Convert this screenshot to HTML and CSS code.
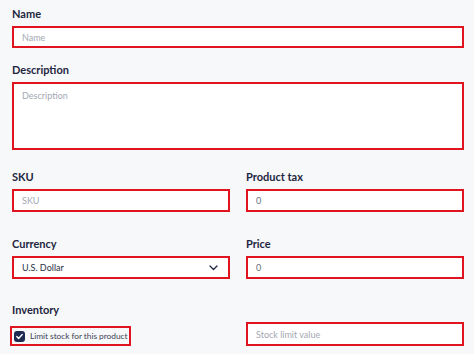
FILE: index.html
```html
<!DOCTYPE html>
<html>
<head>
<meta charset="utf-8">
<link rel="stylesheet" href="styles.css">
</head>
<body>
<form class="form">
  <div class="field">
    <label class="label">Name</label>
    <div class="input"><span class="ph">Name</span></div>
  </div>
  <div class="field field-desc">
    <label class="label">Description</label>
    <div class="input textarea"><span class="ph">Description</span></div>
  </div>
  <div class="row row-sku">
    <div class="field">
      <label class="label">SKU</label>
      <div class="input input-row"><span class="ph">SKU</span></div>
    </div>
    <div class="field">
      <label class="label">Product tax</label>
      <div class="input input-row"><span class="val">0</span></div>
    </div>
  </div>
  <div class="row row-cur">
    <div class="field">
      <label class="label">Currency</label>
      <div class="input input-row select"><span class="val dark">U.S. Dollar</span>
        <svg class="chev" width="9" height="6" viewBox="0 0 9 6"><path d="M1 1l3.5 3.5L8 1" fill="none" stroke="#1e2640" stroke-width="1.3" stroke-linecap="round" stroke-linejoin="round"/></svg>
      </div>
    </div>
    <div class="field">
      <label class="label">Price</label>
      <div class="input input-row"><span class="val">0</span></div>
    </div>
  </div>
  <div class="row row-inv">
    <div class="field">
      <label class="label">Inventory</label>
      <div class="check">
        <span class="box"><svg width="9" height="9" viewBox="0 0 9 9"><path d="M1.8 4.6l1.8 1.8 3.6-3.8" fill="none" stroke="#fff" stroke-width="1.4" stroke-linecap="round" stroke-linejoin="round"/></svg></span>
        <span class="check-text">Limit stock for this product</span>
      </div>
    </div>
    <div class="field field-stock">
      <div class="input input-stock"><span class="ph">Stock limit value</span></div>
    </div>
  </div>
</form>
</body>
</html>
```

FILE: styles.css
```css
* { box-sizing: border-box; }
html, body { margin: 0; padding: 0; }
body {
  background: #f7f8fa;
  font-family: "Lato", "Liberation Sans", sans-serif;
  color: #1e2640;
  width: 474px;
  height: 354px;
  overflow: hidden;
}
.form {
  padding: 6px 10px 0 12px;
  display: flex;
  flex-direction: column;
}
.field { display: flex; flex-direction: column; }
.label {
  font-size: 11px;
  font-weight: 700;
  line-height: 16px;
  color: #1e2640;
  margin-bottom: 4px;
}
.input {
  background: #fff;
  border: 2px solid #e0141e;
  height: 22px;
  display: flex;
  align-items: center;
  padding: 0 8px 0 8px;
  font-size: 9px;
}
.ph { color: #a3a8b2; }
.val { color: #6b7080; }
.val.dark { color: #2a3045; }
.field-desc { margin-top: 14px; }
.textarea { height: 68px; align-items: flex-start; padding-top: 6px; }
.row {
  display: grid;
  grid-template-columns: 218px 218px;
  column-gap: 16px;
}
.row-sku { margin-top: 19px; }
.row-cur { margin-top: 24px; }
.row-inv { margin-top: 23px; }
.input-row { height: 23px; }
.select { justify-content: space-between; padding-right: 10px; }
.check {
  display: flex;
  align-items: center;
  gap: 5px;
  border: 2px solid #e0141e;
  height: 20px;
  width: max-content;
  margin-left: -2px;
  padding: 0 2px 0 2px;
  margin-top: 4px;
  white-space: nowrap;
}
.box {
  flex: none;
  width: 11px; height: 11px;
  background: #1e2a52;
  border-radius: 3px;
  display: flex; align-items: center; justify-content: center;
}
.check-text { font-size: 8.4px; color: #3c4255; letter-spacing: -0.05px; }
.field-stock { justify-content: flex-end; }
.input-stock { height: 24px; }
```
